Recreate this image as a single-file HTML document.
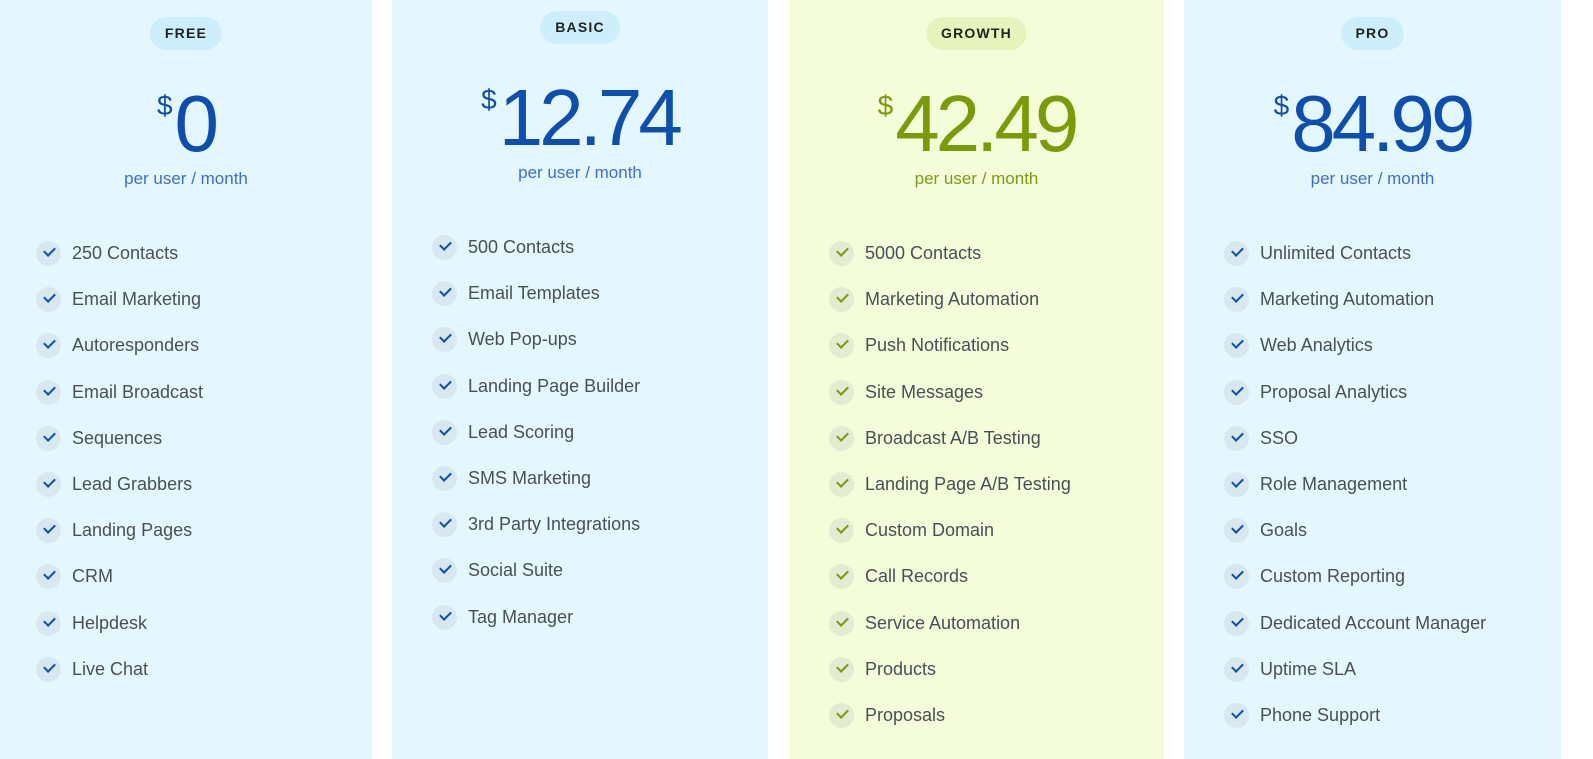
<!DOCTYPE html>
<html><head><meta charset="utf-8"><style>
body{margin:0;width:1593px;height:759px;background:#fff;font-family:"Liberation Sans",sans-serif;overflow:hidden;position:relative}
.card{position:absolute;top:0;height:759px;background:#e5f7fe}
.g{background:#f5fcda}
.badge{position:absolute;left:50%;transform:translateX(-50%);height:33px;line-height:33px;border-radius:17px;padding:0 15px;background:#cdeffb;font-size:14px;font-weight:bold;letter-spacing:1.2px;color:#222}
.g .badge{background:#e6f4bb}
.price{position:absolute;left:0;right:0;text-align:center;color:#0d4fae;white-space:nowrap}
.price .d{font-size:28px;vertical-align:top;position:relative;top:6px;margin-right:2px}
.price .n{font-size:80px;letter-spacing:-4px;line-height:1}
.per{position:absolute;left:0;right:0;text-align:center;font-size:17px;color:#3f6fc4}
.g .price{color:#7a9a06}.g .per{color:#7d9b10}
ul{list-style:none;margin:0;padding:0;position:absolute;left:36px}
li{height:46.2px;position:relative;padding-left:36px;font-size:18px;color:#4a4f57;line-height:25px}
li:before{content:"";position:absolute;left:0;top:0;width:25px;height:25px;border-radius:50%;background:#d9e7f1}
li:after{content:"";position:absolute;left:8px;top:6px;width:9px;height:5px;border-left:2px solid #0d4fae;border-bottom:2px solid #0d4fae;transform:rotate(-45deg)}
.g li:before{background:#e3ecd2}.g li:after{border-color:#7a9a06}
</style></head><body>
<div class="card" style="left:0;width:372px">
<div class="badge" style="top:17px">FREE</div>
<div class="price" style="top:84px"><span class="d">$</span><span class="n">0</span></div>
<div class="per" style="top:169px">per user / month</div>
<ul style="top:241px"><li>250 Contacts</li><li>Email Marketing</li><li>Autoresponders</li><li>Email Broadcast</li><li>Sequences</li><li>Lead Grabbers</li><li>Landing Pages</li><li>CRM</li><li>Helpdesk</li><li>Live Chat</li></ul>
</div>
<div class="card" style="left:392px;width:376px">
<div class="badge" style="top:11px">BASIC</div>
<div class="price" style="top:78px"><span class="d">$</span><span class="n">12.74</span></div>
<div class="per" style="top:163px">per user / month</div>
<ul style="top:235px;left:40px"><li>500 Contacts</li><li>Email Templates</li><li>Web Pop-ups</li><li>Landing Page Builder</li><li>Lead Scoring</li><li>SMS Marketing</li><li>3rd Party Integrations</li><li>Social Suite</li><li>Tag Manager</li></ul>
</div>
<div class="card g" style="left:789px;width:375px">
<div class="badge" style="top:17px">GROWTH</div>
<div class="price" style="top:84px"><span class="d">$</span><span class="n">42.49</span></div>
<div class="per" style="top:169px">per user / month</div>
<ul style="top:241px;left:40px"><li>5000 Contacts</li><li>Marketing Automation</li><li>Push Notifications</li><li>Site Messages</li><li>Broadcast A/B Testing</li><li>Landing Page A/B Testing</li><li>Custom Domain</li><li>Call Records</li><li>Service Automation</li><li>Products</li><li>Proposals</li></ul>
</div>
<div class="card" style="left:1184px;width:377px">
<div class="badge" style="top:17px">PRO</div>
<div class="price" style="top:84px"><span class="d">$</span><span class="n">84.99</span></div>
<div class="per" style="top:169px">per user / month</div>
<ul style="top:241px;left:40px"><li>Unlimited Contacts</li><li>Marketing Automation</li><li>Web Analytics</li><li>Proposal Analytics</li><li>SSO</li><li>Role Management</li><li>Goals</li><li>Custom Reporting</li><li>Dedicated Account Manager</li><li>Uptime SLA</li><li>Phone Support</li></ul>
</div>
</body></html>
